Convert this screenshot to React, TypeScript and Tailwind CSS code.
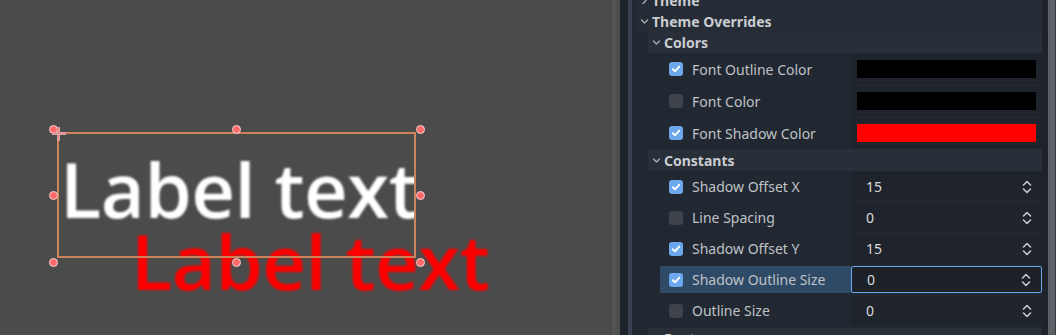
import React from "react";

const font = { fontFamily: '"Noto Sans", "Open Sans", sans-serif' };

function Check({ on }: { on: boolean }) {
  return on ? (
    <div className="w-[14px] h-[14px] rounded-[3px] bg-[#6da7ec] flex items-center justify-center shrink-0">
      <svg width="10" height="10" viewBox="0 0 10 10">
        <path d="M1.8 5.2 L4 7.3 L8.3 2.6" stroke="#fff" strokeWidth="1.9" fill="none" strokeLinecap="round" strokeLinejoin="round" />
      </svg>
    </div>
  ) : (
    <div className="w-[14px] h-[14px] rounded-[3px] bg-[#3e434c] shrink-0" />
  );
}

function Spin() {
  return (
    <svg width="10" height="14" viewBox="0 0 10 14">
      <path d="M1.5 5 L5 1.5 L8.5 5 M1.5 9 L5 12.5 L8.5 9" stroke="#c5c8cc" strokeWidth="1.6" fill="none" strokeLinecap="round" strokeLinejoin="round" />
    </svg>
  );
}

function Chevron() {
  return (
    <svg width="9" height="9" viewBox="0 0 9 9" className="shrink-0">
      <path d="M1.5 3 L4.5 6 L7.5 3" stroke="#a9adb3" strokeWidth="1.4" fill="none" strokeLinecap="round" strokeLinejoin="round" />
    </svg>
  );
}

function Header({ label, h = 21 }: { label: string; h?: number }) {
  return (
    <div className="flex items-center gap-[3px] pl-[4px] bg-[#292f39]" style={{ height: h }}>
      <Chevron />
      <span className="text-[14px] font-bold text-[#c9ccd1]">{label}</span>
    </div>
  );
}

function ColorRow({ label, on, color }: { label: string; on: boolean; color: string }) {
  return (
    <div className="flex h-[32px] items-stretch pl-[12px]">
      <div className="w-[191px] flex items-center pl-[9px] gap-[9px]">
        <Check on={on} />
        <span className="text-[14px] text-[#bfc2c7] whitespace-nowrap">{label}</span>
      </div>
      <div className="flex-1 bg-[#1f242c] flex items-center px-[6px] my-[1px]">
        <div className="h-[18px] w-full" style={{ background: color }} />
      </div>
    </div>
  );
}

function NumRow({ label, on, value, active }: { label: string; on: boolean; value: string; active?: boolean }) {
  return (
    <div className="flex h-[31px] items-stretch pl-[12px]">
      <div className={`w-[191px] flex items-center pl-[9px] gap-[9px] my-[2px] ${active ? "bg-[#2f4a66]" : ""}`}>
        <Check on={on} />
        <span className="text-[14px] text-[#bfc2c7] whitespace-nowrap">{label}</span>
      </div>
      <div className={`flex-1 flex items-center justify-between pl-[15px] pr-[10px] ${active ? "bg-[#1d2128] border border-[#6aa9ee] rounded-[2px] my-[2px]" : "bg-[#1f242c] my-[1px]"}`}>
        <span className="text-[14px] text-[#d9dbde]">{value}</span>
        <Spin />
      </div>
    </div>
  );
}

function Viewport() {
  const textStyle: React.CSSProperties = {
    fontFamily: '"Open Sans", "Noto Sans", sans-serif',
    fontWeight: 600,
    fontSize: "76px",
    lineHeight: "1",
    letterSpacing: "-0.5px",
    filter: "blur(1.2px)",
    whiteSpace: "nowrap",
  };
  return (
    <div className="relative w-[612px] h-full bg-[#4b4b4b] overflow-hidden">
      <div className="absolute left-[131px] top-[223px] text-[#ff0000]" style={textStyle}>
        Label text
      </div>
      <div className="absolute left-[57px] top-[132px] w-[359px] h-[126px] border-2 border-[#cd8359] overflow-hidden">
        <div className="absolute left-[1px] top-[17px] text-white" style={textStyle}>
          Label text
        </div>
      </div>
      {[
        [53, 129], [236, 129], [420, 129],
        [53, 195], [420, 195],
        [53, 262], [236, 262], [420, 262],
      ].map(([x, y], i) => (
        <div
          key={i}
          className="absolute w-[9px] h-[9px] rounded-full bg-[#ff6b6b] border border-[#f0d0d0]"
          style={{ left: x - 4.5, top: y - 4.5 }}
        />
      ))}
      <div className="absolute left-[52px] top-[132px] w-[14px] h-[3px] bg-[#e88f8f] border-y border-[#d9a0a0]" />
      <div className="absolute left-[57px] top-[127px] w-[3px] h-[14px] bg-[#e88f8f] border-x border-[#d9a0a0]" />
    </div>
  );
}

export default function App() {
  return (
    <div className="w-[1056px] h-[335px] flex overflow-hidden bg-[#222831]" style={font}>
      <Viewport />
      <div className="w-[4px] bg-[#545454]" />
      <div className="w-[4px] bg-[#4e4e4e]" />
      <div className="w-[8px] bg-[#1e222a]" />
      <div className="w-[4px] bg-[#3a4150]" />
      <div className="flex-1 bg-[#222831] flex flex-col pl-[4px] mt-[-10px]">
        <div className="h-[21px] flex items-center gap-[3px] pl-[4px] bg-[#262c35]">
          <svg width="9" height="9" viewBox="0 0 9 9"><path d="M3 1.5 L6 4.5 L3 7.5" stroke="#a9adb3" strokeWidth="1.4" fill="none" strokeLinecap="round" /></svg>
          <span className="text-[14px] font-bold text-[#c9ccd1]">Theme</span>
        </div>
        <div className="h-[21px] flex items-center gap-[3px] pl-[4px] bg-[#262c35]">
          <Chevron />
          <span className="text-[14px] font-bold text-[#c9ccd1]">Theme Overrides</span>
        </div>
        <div className="flex flex-col pl-[12px]">
          <Header label="Colors" />
          <div>
            <ColorRow label="Font Outline Color" on color="#000" />
            <ColorRow label="Font Color" on={false} color="#000" />
            <ColorRow label="Font Shadow Color" on color="#ff0000" />
          </div>
          <Header label="Constants" h={22} />
          <div>
            <NumRow label="Shadow Offset X" on value="15" />
            <NumRow label="Line Spacing" on={false} value="0" />
            <NumRow label="Shadow Offset Y" on value="15" />
            <NumRow label="Shadow Outline Size" on value="0" active />
            <NumRow label="Outline Size" on={false} value="0" />
          </div>
          <div className="mt-[2px]">
            <Header label="Fonts" />
          </div>
        </div>
      </div>
      <div className="w-[6px] bg-[#1e222a]" />
      <div className="w-[7px] bg-[#5d6167]" />
      <div className="w-[1px] bg-[#3a3a3a]" />
    </div>
  );
}
